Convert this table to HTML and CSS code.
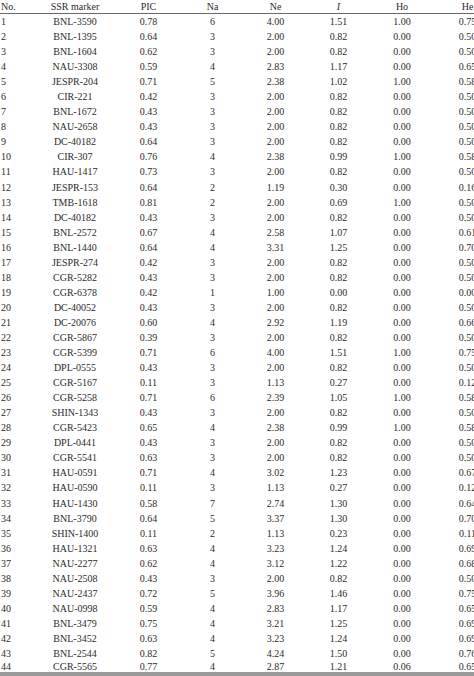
FILE: index.html
```html
<!DOCTYPE html>
<html>
<head>
<meta charset="utf-8">
<link rel="stylesheet" href="styles.css">
</head>
<body>
<div class="table">
  <div class="row head"><span>No.</span><span>SSR marker</span><span>PIC</span><span>Na</span><span>Ne</span><span><i>I</i></span><span>Ho</span><span>He</span></div>
  <div class="row"><span>1</span><span>BNL-3590</span><span>0.78</span><span>6</span><span>4.00</span><span>1.51</span><span>1.00</span><span>0.75</span></div>
  <div class="row"><span>2</span><span>BNL-1395</span><span>0.64</span><span>3</span><span>2.00</span><span>0.82</span><span>0.00</span><span>0.50</span></div>
  <div class="row"><span>3</span><span>BNL-1604</span><span>0.62</span><span>3</span><span>2.00</span><span>0.82</span><span>0.00</span><span>0.50</span></div>
  <div class="row"><span>4</span><span>NAU-3308</span><span>0.59</span><span>4</span><span>2.83</span><span>1.17</span><span>0.00</span><span>0.65</span></div>
  <div class="row"><span>5</span><span>JESPR-204</span><span>0.71</span><span>5</span><span>2.38</span><span>1.02</span><span>1.00</span><span>0.58</span></div>
  <div class="row"><span>6</span><span>CIR-221</span><span>0.42</span><span>3</span><span>2.00</span><span>0.82</span><span>0.00</span><span>0.50</span></div>
  <div class="row"><span>7</span><span>BNL-1672</span><span>0.43</span><span>3</span><span>2.00</span><span>0.82</span><span>0.00</span><span>0.50</span></div>
  <div class="row"><span>8</span><span>NAU-2658</span><span>0.43</span><span>3</span><span>2.00</span><span>0.82</span><span>0.00</span><span>0.50</span></div>
  <div class="row"><span>9</span><span>DC-40182</span><span>0.64</span><span>3</span><span>2.00</span><span>0.82</span><span>0.00</span><span>0.50</span></div>
  <div class="row"><span>10</span><span>CIR-307</span><span>0.76</span><span>4</span><span>2.38</span><span>0.99</span><span>1.00</span><span>0.58</span></div>
  <div class="row"><span>11</span><span>HAU-1417</span><span>0.73</span><span>3</span><span>2.00</span><span>0.82</span><span>0.00</span><span>0.50</span></div>
  <div class="row"><span>12</span><span>JESPR-153</span><span>0.64</span><span>2</span><span>1.19</span><span>0.30</span><span>0.00</span><span>0.16</span></div>
  <div class="row"><span>13</span><span>TMB-1618</span><span>0.81</span><span>2</span><span>2.00</span><span>0.69</span><span>1.00</span><span>0.50</span></div>
  <div class="row"><span>14</span><span>DC-40182</span><span>0.43</span><span>3</span><span>2.00</span><span>0.82</span><span>0.00</span><span>0.50</span></div>
  <div class="row"><span>15</span><span>BNL-2572</span><span>0.67</span><span>4</span><span>2.58</span><span>1.07</span><span>0.00</span><span>0.61</span></div>
  <div class="row"><span>16</span><span>BNL-1440</span><span>0.64</span><span>4</span><span>3.31</span><span>1.25</span><span>0.00</span><span>0.70</span></div>
  <div class="row"><span>17</span><span>JESPR-274</span><span>0.42</span><span>3</span><span>2.00</span><span>0.82</span><span>0.00</span><span>0.50</span></div>
  <div class="row"><span>18</span><span>CGR-5282</span><span>0.43</span><span>3</span><span>2.00</span><span>0.82</span><span>0.00</span><span>0.50</span></div>
  <div class="row"><span>19</span><span>CGR-6378</span><span>0.42</span><span>1</span><span>1.00</span><span>0.00</span><span>0.00</span><span>0.00</span></div>
  <div class="row"><span>20</span><span>DC-40052</span><span>0.43</span><span>3</span><span>2.00</span><span>0.82</span><span>0.00</span><span>0.50</span></div>
  <div class="row"><span>21</span><span>DC-20076</span><span>0.60</span><span>4</span><span>2.92</span><span>1.19</span><span>0.00</span><span>0.66</span></div>
  <div class="row"><span>22</span><span>CGR-5867</span><span>0.39</span><span>3</span><span>2.00</span><span>0.82</span><span>0.00</span><span>0.50</span></div>
  <div class="row"><span>23</span><span>CGR-5399</span><span>0.71</span><span>6</span><span>4.00</span><span>1.51</span><span>1.00</span><span>0.75</span></div>
  <div class="row"><span>24</span><span>DPL-0555</span><span>0.43</span><span>3</span><span>2.00</span><span>0.82</span><span>0.00</span><span>0.50</span></div>
  <div class="row"><span>25</span><span>CGR-5167</span><span>0.11</span><span>3</span><span>1.13</span><span>0.27</span><span>0.00</span><span>0.12</span></div>
  <div class="row"><span>26</span><span>CGR-5258</span><span>0.71</span><span>6</span><span>2.39</span><span>1.05</span><span>1.00</span><span>0.58</span></div>
  <div class="row"><span>27</span><span>SHIN-1343</span><span>0.43</span><span>3</span><span>2.00</span><span>0.82</span><span>0.00</span><span>0.50</span></div>
  <div class="row"><span>28</span><span>CGR-5423</span><span>0.65</span><span>4</span><span>2.38</span><span>0.99</span><span>1.00</span><span>0.58</span></div>
  <div class="row"><span>29</span><span>DPL-0441</span><span>0.43</span><span>3</span><span>2.00</span><span>0.82</span><span>0.00</span><span>0.50</span></div>
  <div class="row"><span>30</span><span>CGR-5541</span><span>0.63</span><span>3</span><span>2.00</span><span>0.82</span><span>0.00</span><span>0.50</span></div>
  <div class="row"><span>31</span><span>HAU-0591</span><span>0.71</span><span>4</span><span>3.02</span><span>1.23</span><span>0.00</span><span>0.67</span></div>
  <div class="row"><span>32</span><span>HAU-0590</span><span>0.11</span><span>3</span><span>1.13</span><span>0.27</span><span>0.00</span><span>0.12</span></div>
  <div class="row"><span>33</span><span>HAU-1430</span><span>0.58</span><span>7</span><span>2.74</span><span>1.30</span><span>0.00</span><span>0.64</span></div>
  <div class="row"><span>34</span><span>BNL-3790</span><span>0.64</span><span>5</span><span>3.37</span><span>1.30</span><span>0.00</span><span>0.70</span></div>
  <div class="row"><span>35</span><span>SHIN-1400</span><span>0.11</span><span>2</span><span>1.13</span><span>0.23</span><span>0.00</span><span>0.11</span></div>
  <div class="row"><span>36</span><span>HAU-1321</span><span>0.63</span><span>4</span><span>3.23</span><span>1.24</span><span>0.00</span><span>0.69</span></div>
  <div class="row"><span>37</span><span>NAU-2277</span><span>0.62</span><span>4</span><span>3.12</span><span>1.22</span><span>0.00</span><span>0.68</span></div>
  <div class="row"><span>38</span><span>NAU-2508</span><span>0.43</span><span>3</span><span>2.00</span><span>0.82</span><span>0.00</span><span>0.50</span></div>
  <div class="row"><span>39</span><span>NAU-2437</span><span>0.72</span><span>5</span><span>3.96</span><span>1.46</span><span>0.00</span><span>0.75</span></div>
  <div class="row"><span>40</span><span>NAU-0998</span><span>0.59</span><span>4</span><span>2.83</span><span>1.17</span><span>0.00</span><span>0.65</span></div>
  <div class="row"><span>41</span><span>BNL-3479</span><span>0.75</span><span>4</span><span>3.21</span><span>1.25</span><span>0.00</span><span>0.69</span></div>
  <div class="row"><span>42</span><span>BNL-3452</span><span>0.63</span><span>4</span><span>3.23</span><span>1.24</span><span>0.00</span><span>0.69</span></div>
  <div class="row"><span>43</span><span>BNL-2544</span><span>0.82</span><span>5</span><span>4.24</span><span>1.50</span><span>0.00</span><span>0.76</span></div>
  <div class="row last"><span>44</span><span>CGR-5565</span><span>0.77</span><span>4</span><span>2.87</span><span>1.21</span><span>0.06</span><span>0.65</span></div>
  <div class="rule-bottom"></div>
</div>
</body>
</html>
```

FILE: styles.css
```css
html, body {
  margin: 0;
  padding: 0;
  background: #ffffff;
  overflow: hidden;
}

.table {
  width: 502px;
  font-family: "Liberation Serif", "Times New Roman", serif;
  font-size: 10px;
  color: #2b2b2b;
}

.row {
  display: grid;
  grid-template-columns: 33px 84px 63px 65px 61px 65px 62px 69px;
  height: 15.047px;
  line-height: 15px;
  align-items: start;
}

.row > span {
  text-align: center;
  white-space: nowrap;
}

.row > span:first-child {
  text-align: left;
  padding-left: 1px;
}

.head {
  height: 13px;
  line-height: 13px;
  border-bottom: 1px solid #6a6a6a;
}

.row.last {
  height: 11px;
  line-height: 12.5px;
}

.rule-bottom {
  height: 4px;
  background: #9a9a9a;
}
```
